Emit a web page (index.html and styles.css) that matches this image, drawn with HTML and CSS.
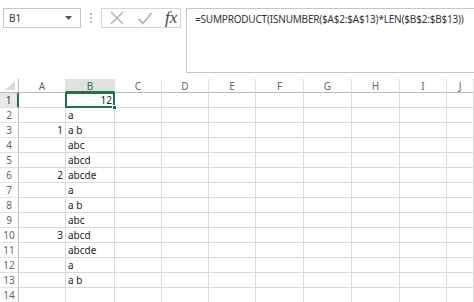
FILE: index.html
```html
<!DOCTYPE html>
<html lang="en">
<head>
<meta charset="UTF-8">
<title>Book1 - Excel</title>
<link rel="stylesheet" href="styles.css">
</head>
<body>

<div class="toolbar">
    <div class="namebox">
        <span>B1</span>
        <svg class="drop" width="7" height="4" viewBox="0 0 7 4"><path d="M0 0 L7 0 L3.5 4 Z" fill="#555"/></svg>
    </div>
    <div class="grip"><i></i><i></i><i></i></div>
    <div class="fbuttons">
        <svg width="16" height="16" viewBox="0 0 16 16"><path d="M2 2 L14 14 M14 2 L2 14" stroke="#b4b4b4" stroke-width="1.6" fill="none"/></svg>
        <svg width="16" height="16" viewBox="0 0 16 16"><path d="M1.5 9 L6 13.5 L14.5 3" stroke="#b4b4b4" stroke-width="1.8" fill="none"/></svg>
        <span class="fx">fx</span>
    </div>
    <div class="formula">=SUMPRODUCT(ISNUMBER($A$2:$A$13)*LEN($B$2:$B$13))</div>
</div>

<div class="sheet">
    <div class="row head">
        <div class="corner"><svg width="10" height="9" viewBox="0 0 10 9"><path d="M10 0 L10 9 L0 9 Z" fill="#d8d8d8"/></svg></div>
        <div>A</div><div class="sel">B</div><div>C</div><div>D</div><div>E</div><div>F</div><div>G</div><div>H</div><div>I</div><div>J</div>
    </div>
    <div class="row">
        <div class="num sel">1</div><div></div><div class="active r">12</div><div></div><div></div><div></div><div></div><div></div><div></div><div></div><div></div>
    </div>
    <div class="row">
        <div class="num">2</div><div></div><div>a</div><div></div><div></div><div></div><div></div><div></div><div></div><div></div><div></div>
    </div>
    <div class="row">
        <div class="num">3</div><div class="r">1</div><div>a b</div><div></div><div></div><div></div><div></div><div></div><div></div><div></div><div></div>
    </div>
    <div class="row">
        <div class="num">4</div><div></div><div>abc</div><div></div><div></div><div></div><div></div><div></div><div></div><div></div><div></div>
    </div>
    <div class="row">
        <div class="num">5</div><div></div><div>abcd</div><div></div><div></div><div></div><div></div><div></div><div></div><div></div><div></div>
    </div>
    <div class="row">
        <div class="num">6</div><div class="r">2</div><div>abcde</div><div></div><div></div><div></div><div></div><div></div><div></div><div></div><div></div>
    </div>
    <div class="row">
        <div class="num">7</div><div></div><div>a</div><div></div><div></div><div></div><div></div><div></div><div></div><div></div><div></div>
    </div>
    <div class="row">
        <div class="num">8</div><div></div><div>a b</div><div></div><div></div><div></div><div></div><div></div><div></div><div></div><div></div>
    </div>
    <div class="row">
        <div class="num">9</div><div></div><div>abc</div><div></div><div></div><div></div><div></div><div></div><div></div><div></div><div></div>
    </div>
    <div class="row">
        <div class="num">10</div><div class="r">3</div><div>abcd</div><div></div><div></div><div></div><div></div><div></div><div></div><div></div><div></div>
    </div>
    <div class="row">
        <div class="num">11</div><div></div><div>abcde</div><div></div><div></div><div></div><div></div><div></div><div></div><div></div><div></div>
    </div>
    <div class="row">
        <div class="num">12</div><div></div><div>a</div><div></div><div></div><div></div><div></div><div></div><div></div><div></div><div></div>
    </div>
    <div class="row">
        <div class="num">13</div><div></div><div>a b</div><div></div><div></div><div></div><div></div><div></div><div></div><div></div><div></div>
    </div>
    <div class="row">
        <div class="num">14</div><div></div><div></div><div></div><div></div><div></div><div></div><div></div><div></div><div></div><div></div>
    </div>
</div>

</body>
</html>
```

FILE: styles.css
```css
body {
    margin: 0;
    font-family: "Noto Sans", "Liberation Sans", sans-serif;
    font-size: 10px;
    color: #222;
    background: #fff;
    overflow: hidden;
}

/* formula bar */
.toolbar {
    display: flex;
    align-items: flex-start;
    padding-top: 8px;
    height: 65px;
}
.namebox {
    display: flex;
    flex-shrink: 0;
    align-items: center;
    justify-content: space-between;
    box-sizing: border-box;
    width: 78px;
    height: 20px;
    margin-left: 3px;
    padding: 0 8px 0 5px;
    border: 1px solid #c6c6c6;
    color: #333;
}
.grip {
    display: flex;
    flex-shrink: 0;
    flex-direction: column;
    align-items: center;
    gap: 2px;
    width: 20px;
    padding-top: 5px;
}
.grip i {
    display: block;
    width: 2px;
    height: 2px;
    background: #b8b8b8;
}
.fbuttons {
    display: flex;
    flex-shrink: 0;
    align-items: center;
    gap: 12px;
    box-sizing: border-box;
    width: 80px;
    height: 20px;
    padding-left: 7px;
    border: 1px solid #d4d4d4;
}
.fx {
    font-family: "Liberation Serif", serif;
    font-style: italic;
    font-size: 17px;
    line-height: 16px;
    color: #444;
}
.formula {
    flex: 1;
    min-width: 0;
    box-sizing: border-box;
    height: 65px;
    margin-left: 5px;
    padding: 3px 8px;
    border: 1px solid #c6c6c6;
    border-right: none;
    line-height: 14px;
    color: #333;
    letter-spacing: -0.2px;
    white-space: nowrap;
}

/* grid */
.sheet {
    margin-top: 6px;
}
.row {
    display: grid;
    grid-template-columns: 19px 47px 49px 47px 47px 47px 48px 48px 48px 47px 1fr;
    height: 15px;
}
.row > div {
    box-sizing: border-box;
    border-right: 1px solid #dadada;
    border-bottom: 1px solid #dadada;
    padding: 0 2px;
    line-height: 14px;
    white-space: nowrap;
    overflow: hidden;
}
.row > .r {
    text-align: right;
}
.head {
    height: 14px;
}
.head > div {
    text-align: center;
    color: #666;
    border-bottom-color: #bdbdbd;
    border-right-color: #e2e2e2;
}
.head > .corner {
    display: flex;
    align-items: flex-end;
    justify-content: flex-end;
    padding: 0 3px 2px 0;
    border-right-color: #bdbdbd;
}
.head > .sel {
    background: #e1e1e1;
    color: #217346;
    border-bottom: 2px solid #217346;
}
.row > .num {
    padding: 0;
    text-align: center;
    color: #666;
    border-right-color: #bdbdbd;
    border-bottom-color: #e2e2e2;
}
.row > .num.sel {
    background: #e8e8e8;
    color: #333;
    border-right: 2px solid #217346;
}

/* active cell */
.active {
    position: relative;
    overflow: visible !important;
}
.active::before {
    content: "";
    position: absolute;
    left: -1px;
    top: -1px;
    right: -1px;
    bottom: -1px;
    border: 2px solid #217346;
}
.active::after {
    content: "";
    position: absolute;
    right: -3px;
    bottom: -3px;
    width: 5px;
    height: 5px;
    background: #217346;
    border: 1px solid #fff;
    box-sizing: border-box;
}
```
